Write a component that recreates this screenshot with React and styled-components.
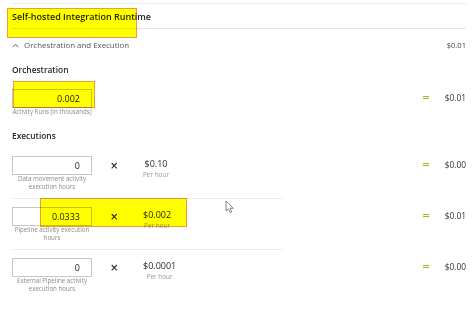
import React from 'react'
import styled, { createGlobalStyle } from 'styled-components'

const GlobalStyle = createGlobalStyle`
  html, body {
    margin: 0;
    padding: 0;
    background: #fff;
  }
  body {
    font-family: "Open Sans", "Noto Sans", sans-serif;
    color: #333;
  }
`

const Page = styled.div`
  position: relative;
  width: 474px;
  height: 311px;
  overflow: hidden;
  box-sizing: border-box;
  padding: 3px 8px 0 12px;
`

const TopRule = styled.div`
  border-top: 1px solid #ececec;
`

const Header = styled.div`
  height: 24px;
  display: flex;
  align-items: center;
  border-bottom: 1px solid #e6e6e6;
  font-size: 9px;
  font-weight: 600;
  color: #1e1e1e;
`

const Toggle = styled.div`
  height: 32px;
  display: flex;
  align-items: center;
  justify-content: space-between;
  font-size: 7.9px;
  color: #555;
`

const ToggleLabel = styled.div`
  display: flex;
  align-items: center;
  gap: 5px;
`

const SmallPrice = styled.span`
  font-size: 7.6px;
  color: #444;
`

const GroupTitle = styled.div`
  margin-top: ${p => p.$top}px;
  line-height: 12px;
  font-size: 8.4px;
  font-weight: 600;
  color: #262626;
`

const Row = styled.div`
  display: flex;
  align-items: flex-start;
  padding: ${p => p.$top}px 0 7px;
`

const Divider = styled.div`
  width: 271px;
  height: 1px;
  background: #ececec;
`

const InputCol = styled.div`
  width: 80px;
  display: flex;
  flex-direction: column;
`

const Field = styled.input`
  width: 80px;
  height: 19px;
  box-sizing: border-box;
  margin: 0;
  border: 1px solid #c6c6c6;
  padding: 0 11px 0 0;
  text-align: right;
  font-family: inherit;
  font-size: 9px;
  color: #222;
  background: transparent;
  outline: none;
`

const FieldLabel = styled.div`
  text-align: center;
  white-space: nowrap;
  font-size: 6.2px;
  line-height: 8px;
  color: #8a8a8a;
`

const Times = styled.div`
  width: 8px;
  margin-left: 18px;
  line-height: 19px;
  font-family: "DejaVu Sans", sans-serif;
  font-size: 10px;
  font-weight: 700;
  color: #333;
  text-align: center;
`

const PriceCol = styled.div`
  margin-left: 25px;
  padding-top: 2px;
  display: flex;
  flex-direction: column;
  align-items: center;
`

const Price = styled.div`
  line-height: 12px;
  font-size: 9px;
  color: #2a2a2a;
`

const PerHour = styled.div`
  line-height: 10px;
  font-size: 6.4px;
  color: #999;
`

const Spacer = styled.div`
  flex: 1;
`

const TotalCell = styled.div`
  height: 19px;
  display: flex;
  align-items: center;
  margin-top: ${p => p.$shift || 0}px;
`

const Equals = styled.span`
  width: 6px;
  height: 1.5px;
  border-top: 1.5px solid #8dbf22;
  border-bottom: 1.5px solid #8dbf22;
`

const Total = styled.span`
  width: 24px;
  margin-left: 13px;
  text-align: right;
  font-size: 8.4px;
  color: #333;
`

const Marker = styled.div`
  position: absolute;
  left: ${p => p.$x}px;
  top: ${p => p.$y}px;
  width: ${p => p.$w}px;
  height: ${p => p.$h}px;
  box-sizing: border-box;
  background: #ffff00;
  border: 1px solid #ef9b3c;
  mix-blend-mode: multiply;
  pointer-events: none;
`

const Cursor = styled.svg`
  position: absolute;
  left: 225px;
  top: 200px;
`

const Chevron = () => (
  <svg width="7" height="5" viewBox="0 0 7 5">
    <polyline points="0.8,4.2 3.5,1.2 6.2,4.2" fill="none" stroke="#5a6b80" strokeWidth="1" />
  </svg>
)

const executions = [
  { value: '0', label: ['Data movement activity', 'execution hours'], price: '$0.10', total: '$0.00' },
  { value: '0.0333', label: ['Pipeline activity execution', 'hours'], price: '$0.002', total: '$0.01' },
  { value: '0', label: ['External Pipeline activity', 'execution hours'], price: '$0.0001', total: '$0.00' },
]

export default function App() {
  return (
    <Page>
      <GlobalStyle />
      <TopRule />
      <Header>Self-hosted Integration Runtime</Header>
      <Toggle>
        <ToggleLabel>
          <Chevron />
          <span>Orchestration and Execution</span>
        </ToggleLabel>
        <SmallPrice>$0.01</SmallPrice>
      </Toggle>

      <GroupTitle $top={3}>Orchestration</GroupTitle>
      <Row $top={13}>
        <InputCol>
          <Field readOnly value="0.002" />
          <FieldLabel>Activity Runs (in thousands)</FieldLabel>
        </InputCol>
        <Spacer />
        <TotalCell $shift={-1}>
          <Equals />
          <Total>$0.01</Total>
        </TotalCell>
      </Row>

      <GroupTitle $top={7}>Executions</GroupTitle>
      {executions.map((item, i) => (
        <React.Fragment key={i}>
          {i > 0 && <Divider />}
          <Row $top={i === 0 ? 14 : 8}>
            <InputCol>
              <Field readOnly value={item.value} />
              <FieldLabel>
                {item.label[0]}
                <br />
                {item.label[1]}
              </FieldLabel>
            </InputCol>
            <Times>×</Times>
            <PriceCol>
              <Price>{item.price}</Price>
              <PerHour>Per hour</PerHour>
            </PriceCol>
            <Spacer />
            <TotalCell $shift={-1}>
              <Equals />
              <Total>{item.total}</Total>
            </TotalCell>
          </Row>
        </React.Fragment>
      ))}

      <Marker $x={7} $y={8} $w={130} $h={30} />
      <Marker $x={13} $y={81} $w={82} $h={27} />
      <Marker $x={40} $y={198} $w={147} $h={29} />

      <Cursor width="9" height="14" viewBox="0 0 9 14">
        <path d="M1 1 L1 11 L3.4 8.8 L5.2 12.6 L6.8 11.9 L5.1 8.3 L8.2 8.3 Z" fill="#fff" stroke="#666" strokeWidth="0.8" strokeLinejoin="round" />
      </Cursor>
    </Page>
  )
}
